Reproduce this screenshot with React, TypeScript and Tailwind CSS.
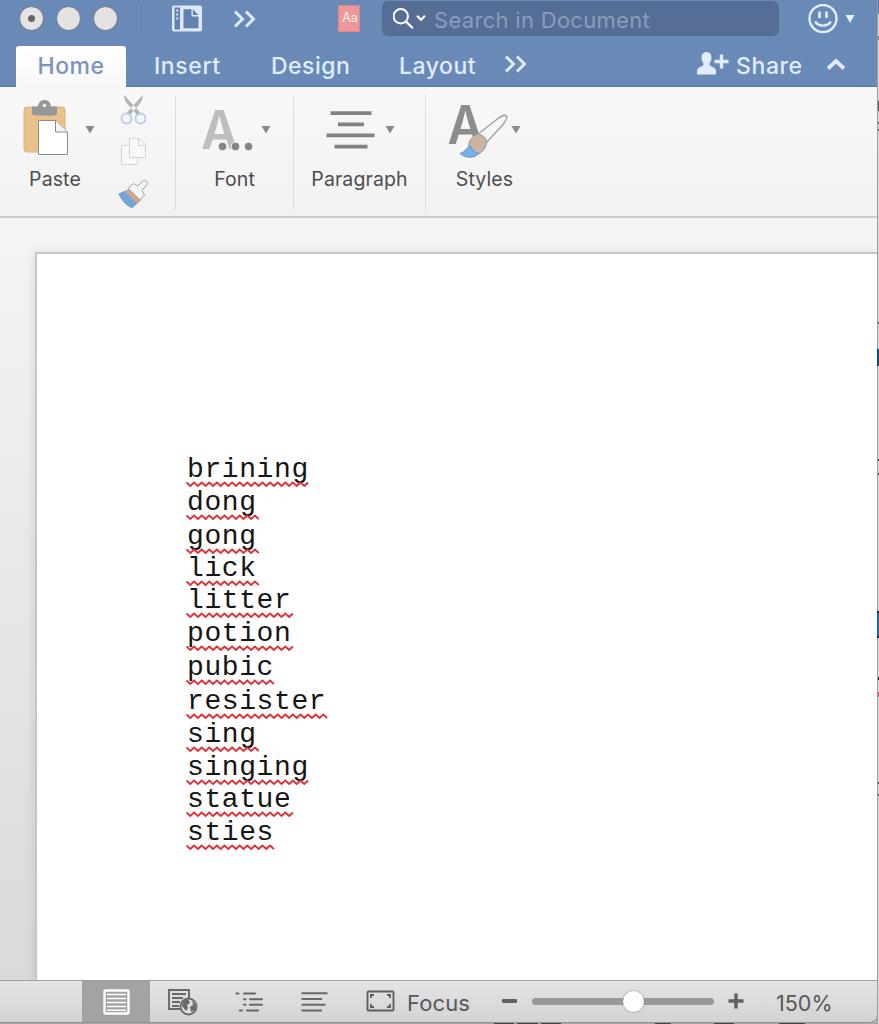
import type { ReactNode } from "react";

const words = [
  { text: "brining", row: "h-[33px]" },
  { text: "dong", row: "h-[34px]" },
  { text: "gong", row: "h-[32px]" },
  { text: "lick", row: "h-[32px]" },
  { text: "litter", row: "h-[33px]" },
  { text: "potion", row: "h-[34px]" },
  { text: "pubic", row: "h-[34px]" },
  { text: "resister", row: "h-[33px]" },
  { text: "sing", row: "h-[33px]" },
  { text: "singing", row: "h-[32px]" },
  { text: "statue", row: "h-[33px]" },
  { text: "sties", row: "h-[33px]" },
];

function Chevrons() {
  return (
    <svg width="24" height="18" viewBox="0 0 24 18" fill="none" stroke="#dfeafb" strokeWidth="3" className="block">
      <path d="M2 1.5l7.500 7.500L2 16.500M13 1.500l7.500 7.500-7.500 7.500" />
    </svg>
  );
}

function Caret({ className = "" }: { className?: string }) {
  return (
    <svg width="10" height="8" viewBox="0 0 10 8" fill="#8b8b8d" className={`block shrink-0 ${className}`}>
      <path d="M.5 0h9L5 7.5z" />
    </svg>
  );
}

// Red spelling zigzag, one half wave every 3.8px
function Squiggle({ length }: { length: number }) {
  const step = 3.8;
  const count = Math.round((length - 1) / step);
  const points = [];
  for (let i = 0; i <= count; i++) {
    points.push(`${(0.5 + i * step).toFixed(1)},${i % 2 ? 5 : 1.5}`);
  }
  return (
    <svg width={length + 3} height="7" className="absolute -left-px top-[28px]" fill="none" stroke="#dc3238" strokeWidth="1.9">
      <polyline points={points.join(" ")} />
    </svg>
  );
}

function TitleBar() {
  return (
    <div className="flex h-[38px] shrink-0 items-start">
      <div className="ml-[19px] mt-[6px] flex gap-[12px]">
        <div className="flex size-[25px] items-center justify-center rounded-full border border-[#6f7686] bg-[#e4e3e1]">
          <div className="size-[7px] rounded-full bg-[#666]" />
        </div>
        <div className="size-[25px] rounded-full border border-[#6f7686] bg-[#e4e3e1]" />
        <div className="size-[25px] rounded-full border border-[#6f7686] bg-[#e4e3e1]" />
      </div>
      <div className="ml-[23px] mt-[4px] h-[29px] w-px bg-[#5f7daf]" />
      <svg width="30" height="27" viewBox="0 0 30 27" className="ml-[30px] mt-[5px]" fill="none">
        <rect x="0" y="0.5" width="30" height="26" rx="2" fill="#dce8fb" />
        <path d="M2.500 2.500h5.500v22H2.500zM11.500 4.300h8v7.200h7v11.800h-15z" fill="#6380af" />
        <path d="M20.800 4.300l5.700 5.700h-5.700z" fill="#6380af" />
        <path d="M5.200 4.500v2M5.200 8.500v2M5.200 12.500v2" stroke="#dce8fb" strokeWidth="2" />
      </svg>
      <div className="ml-[31px] mt-[10px]">
        <Chevrons />
      </div>
      <div className="ml-[81px] mt-[5px] flex h-[27px] w-[22px] items-center justify-center border border-[#dc858b] bg-[#ef969a] pl-[2px] text-[12.5px] text-[#fdeeee]">
        Aa
      </div>
      <div className="ml-[22px] mt-px flex h-[35px] w-[397px] items-center rounded-[6px] bg-[#566d95]">
        <svg width="33" height="22" viewBox="0 0 33 22" fill="none" stroke="#fff" className="ml-[11px]">
          <circle cx="7.800" cy="8.300" r="7.200" strokeWidth="2" />
          <path d="M12.800 13.400l7 6.800" strokeWidth="2.200" />
          <path d="M24 7.800l4 4 4-4" strokeWidth="2.200" />
        </svg>
        <span className="ml-[8px] mt-[3px] text-[22px] leading-[28px] tracking-[0.300px] text-[#899dbe]">Search in Document</span>
      </div>
      <svg width="30" height="30" viewBox="0 0 30 30" className="ml-[29px] mt-[4px]" fill="none" stroke="#e3edfc" strokeWidth="2.400">
        <circle cx="15" cy="14.500" r="13.500" />
        <path d="M7 17.500c3.800 5.400 12.200 5.400 16 0" strokeWidth="2.200" />
        <path d="M11.500 7.500v6.500M18.500 7.500v6.500" strokeWidth="2.600" />
      </svg>
      <svg width="10" height="8" viewBox="0 0 10 8" fill="#e3edfc" className="ml-[7px] mt-[15px]">
        <path d="M.5 0h9L5 8z" />
      </svg>
    </div>
  );
}

function Tabs() {
  return (
    <div className="flex h-[49px] shrink-0 items-end border-b border-[#5c759f] text-[23px] font-medium leading-[28px] text-[#e0ebfc]">
      <div className="-mb-px ml-[16px] flex h-[41px] w-[110px] items-center justify-center rounded-t-[3px] bg-linear-to-b from-white to-[#f8f8f8] pb-[2px] tracking-[0.500px] text-[#7c94bd]">
        Home
      </div>
      <div className="mb-[6px] ml-[28px] w-[67px] tracking-[0.600px]">Insert</div>
      <div className="mb-[6px] ml-[50px] w-[79px] tracking-[0.500px]">Design</div>
      <div className="mb-[6px] ml-[49px] w-[77px] tracking-[0.500px]">Layout</div>
      <div className="mb-[13px] ml-[28px]">
        <Chevrons />
      </div>
      <svg width="32" height="23" viewBox="0 0 32 23" className="mb-[11px] ml-[169px]" fill="#e0ebfc">
        <path d="M9.500 0c3.200 0 5 2.300 5 5.600 0 2.700-.8 4.500-2 5.900v1.700l4.200 2.200c1.500.8 2.300 2 2.300 3.600v3.500H0V19c0-1.600.8-2.800 2.300-3.600l4.200-2.200v-1.700c-1.200-1.400-2-3.200-2-5.900C4.500 2.300 6.300 0 9.500 0z" />
        <path d="M22.800 2.500h3.400v5.300h5.300v3.400h-5.300v5.300h-3.400v-5.300h-5.300V7.800h5.300z" />
      </svg>
      <div className="mb-[6px] ml-[7px] w-[68px] tracking-[0.600px]">Share</div>
      <svg width="20" height="12" viewBox="0 0 20 12" className="mb-[16px] ml-[22px]" fill="none" stroke="#e0ebfc" strokeWidth="3.800">
        <path d="M2 10.500l8-7.500 8 7.500" />
      </svg>
    </div>
  );
}

function Group({ label, className, children }: { label: string; className: string; children: ReactNode }) {
  return (
    <div className={`flex h-[115px] shrink-0 flex-col items-center ${className}`}>
      <div className="flex h-[70px] w-full">{children}</div>
      <span className="text-[19.5px] leading-[28px] tracking-[0.100px] text-[#4d4d4f]">{label}</span>
    </div>
  );
}

function Ribbon() {
  return (
    <div className="flex h-[131px] shrink-0 border-b-2 border-[#cbcbcb] bg-linear-to-b from-[#f8f8f8] to-[#f2f2f2] pt-[8px]">
      <Group label="Paste" className="w-[110px]">
        <svg width="46" height="56" viewBox="0 0 46 56" className="ml-[23px] mt-[5px]">
          <rect x="1" y="7" width="41" height="45" rx="3" fill="#e9c18a" stroke="#d8b27c" />
          <path d="M9 6.500h6c.5-4 2.500-6.500 6.500-6.500S27.500 2.500 28 6.500h6v6c0 2-1 3-3 3H12c-2 0-3-1-3-3z" fill="#969799" />
          <circle cx="21.500" cy="5.500" r="1.800" fill="#eee" />
          <path d="M15.500 20.500h17L44.500 32v22.500h-29z" fill="#fff" stroke="#8c8c8c" />
          <path d="M32.500 20.500V32h12" fill="#f5f5f5" stroke="#8c8c8c" />
        </svg>
        <Caret className="ml-[16px] mt-[31px]" />
      </Group>
      <div className="flex w-[65px] flex-col pl-[8px]">
        <svg width="32" height="31" viewBox="0 0 32 31" fill="none" className="block">
          <path d="M6 0c0 5 3 9 6 12l7.500 8.500 3-2.500-7-8zM25 0c0 5-3 9-6 12l-7.500 8.500-3-2.500 7-8z" fill="#b4b4b4" />
          <circle cx="8.500" cy="23.500" r="5" stroke="#b9cee8" strokeWidth="1.900" />
          <circle cx="22.500" cy="23.500" r="5" stroke="#b9cee8" strokeWidth="1.900" />
        </svg>
        <svg width="32" height="30" viewBox="0 0 32 30" className="mt-[12px] block" fill="#f8f8f8" stroke="#d4d4d4">
          <path d="M3.500 7.500h16v19h-16z" />
          <path d="M11.500.5h10l6 6v13h-16z" />
          <path d="M20.500.5v7h7" fill="none" />
        </svg>
        <svg width="34" height="30" viewBox="0 0 34 30" className="mt-[12px] block">
          <path d="M1 14l8-3.500L20.500 22 14 27.500C9 26 4.500 21 1 14z" fill="#73a4dc" stroke="#6591c4" />
          <path d="M7 11.500l3.500-3L23 20.500l-4 3z" fill="#cda788" />
          <path d="M10 8.500l5.500-5 4 2.500 5-4.500c3-2.500 6.500.5 4 3.500l-4.500 5.500 2.500 4.500-4.500 5z" fill="#f5f5f5" stroke="#a1a1a1" />
        </svg>
      </div>
      <div className="h-[115px] w-px bg-[#dcdcdc]" />
      <Group label="Font" className="w-[117px]">
        <svg width="52" height="70" viewBox="0 -5 52 70" className="ml-[26px]">
          <text x="-1" y="48.500" fontFamily="Inter" fontSize="53" fontWeight="600" fill="#bebec0" textLength="37" lengthAdjust="spacingAndGlyphs">A</text>
          <g fill="#858587" stroke="#f5f5f5" strokeWidth="1">
            <circle cx="20.500" cy="46.500" r="4.300" />
            <circle cx="33.500" cy="46.500" r="4.300" />
            <circle cx="46.500" cy="46.500" r="4.300" />
          </g>
        </svg>
        <Caret className="ml-[7px] mt-[31px]" />
      </Group>
      <div className="h-[115px] w-px bg-[#dcdcdc]" />
      <Group label="Paragraph" className="w-[131px]">
        <svg width="49" height="39" viewBox="0 0 49 39" className="ml-[32px] mt-[16px]" stroke="#828284" strokeWidth="3.800">
          <path d="M4.500 2.200h41M12 13.400h26M.5 24.400h48M8.500 35.600h33" />
        </svg>
        <Caret className="ml-[10px] mt-[31px]" />
      </Group>
      <div className="h-[115px] w-px bg-[#dcdcdc]" />
      <Group label="Styles" className="w-[117px]">
        <svg width="60" height="70" viewBox="0 -8 60 70" className="-mt-[3px] ml-[22px]">
          <text x="-.5" y="44" fontFamily="Inter" fontSize="53" fontWeight="600" fill="#8c8c90" textLength="36" lengthAdjust="spacingAndGlyphs">A</text>
          <path d="M29 35L50 18.500c4-3 7.500-3.500 8.500-2.500s-.5 4.500-3.500 8.500L38 43z" fill="#f7f7f7" stroke="#a3a3a5" strokeWidth="1.500" />
          <path d="M20.500 47c0-7 5-12.500 9.500-12.500s8.500 3.500 8.500 7.500c0 7-6.500 13-12.500 13z" fill="#cbb5a2" stroke="#999" />
          <path d="M12 53.500c5-1 6.500-6.500 11-7.500 1 4.500 5 7 8 7-4 5.500-13 5.500-19 .5z" fill="#78aeea" stroke="#6992c4" />
        </svg>
        <Caret className="ml-[3px] mt-[31px]" />
      </Group>
    </div>
  );
}

function DocumentArea() {
  return (
    <div className="flex min-h-0 flex-1 bg-linear-to-b from-[#f5f5f5] to-[#dadada] pl-[35px] pt-[34px]">
      <div className="flex-1 border-l-2 border-t-2 border-[#c6c6c6] bg-white pl-[150px] pt-[199px] shadow-[-2px_0_9px_rgba(0,0,0,0.09)]">
        {words.map(({ text, row }) => (
          <div
            key={text}
            className={`relative w-fit font-['Courier_New','Liberation_Mono',monospace] text-[28px] leading-[33px] tracking-[0.600px] text-[#151515] ${row}`}
          >
            {text}
            <Squiggle length={text.length * 17.5 + 1.5} />
          </div>
        ))}
      </div>
    </div>
  );
}

function StatusBar() {
  return (
    <div className="flex h-[43px] shrink-0 items-center rounded-br-[8px] border-y border-b-[#929292] border-t-[#a0a0a0] bg-linear-to-b from-[#e4e4e4] to-[#d3d3d3] text-[#58585a]">
      <div className="ml-[82px] flex h-full w-[68px] items-center justify-center bg-[#a3a3a3]">
        <svg width="27" height="26" viewBox="0 0 27 26" fill="none" stroke="#fff">
          <rect x="1.500" y="1.500" width="24" height="23" rx="1" strokeWidth="2.400" />
          <path d="M4 5.500h19M4 9.500h19M4 13.500h19M4 17.500h19M4 21.300h19" strokeWidth="1.600" />
        </svg>
      </div>
      <svg width="31" height="28" viewBox="0 0 31 28" className="ml-[17px]" fill="none" stroke="#69696b" strokeWidth="1.900">
        <path d="M13 21H2V2h20v9M5 6h14M5 10h11M5 14h8M5 18h7" />
        <circle cx="21.500" cy="18.500" r="8" fill="#dedede" />
        <path d="M16 13l5-2 2 4-3 2 1 3-2 3-4-5zM25 13l4 4-1 5-4 2-1-5 3-2z" fill="#69696b" stroke="none" />
      </svg>
      <svg width="29" height="20" viewBox="0 0 29 20" className="ml-[37px]" fill="none" stroke="#69696b" strokeWidth="2.100" strokeLinecap="round">
        <path d="M1.500 1.500h2M9 1.500h11M9 7.200h1.500M15 7.200h12M9 12.800h1.500M15 12.800h12M5 18.500h2M12 18.500h11" />
      </svg>
      <svg width="27" height="20" viewBox="0 0 27 20" className="ml-[37px]" fill="none" stroke="#69696b" strokeWidth="2">
        <path d="M.5 1.300h26M.5 7h20.500M.5 12.700h24M.5 18.500h20.500" />
      </svg>
      <svg width="29" height="22" viewBox="0 0 29 22" className="mb-[2px] ml-[38px]" fill="none" stroke="#5f5f61" strokeWidth="1.900">
        <rect x="1.500" y="1.500" width="26" height="19" rx="1" />
        <path d="M5 8V5h3M21 5h3v3M24 14v3h-3M8 17H5v-3" />
      </svg>
      <span className="ml-[12px] mt-[2px] w-[64px] text-[22px] leading-[28px] tracking-[0.100px]">Focus</span>
      <div className="mb-px ml-[31px] h-[4px] w-[15px] rounded-[1px] bg-[#606062]" />
      <div className="relative ml-[15px] h-[7px] w-[182px] rounded-full bg-[#999]">
        <div className="absolute left-[91px] top-[-7px] size-[21px] rounded-full bg-white shadow-[0_0_2px_#777]" />
      </div>
      <svg width="16" height="16" viewBox="0 0 16 16" className="mb-px ml-[14px]" stroke="#606062" strokeWidth="3.400">
        <path d="M8 .5v15M.5 8h15" />
      </svg>
      <span className="ml-[32px] mt-[2px] w-[60px] text-[21.5px] leading-[28px]">150%</span>
    </div>
  );
}

// Sliver of the window that sits behind this one
function BackgroundEdge() {
  return (
    <div className="flex w-[2px] shrink-0 flex-col border-l border-[#9c9c9c] bg-[#dcdcdc]">
      <div className="h-[14px] bg-[#526f9f]" />
      <div className="mt-[22px] h-[4px] bg-[#777]" />
      <div className="mt-[61px] h-[10px] bg-[#555]" />
      <div className="mt-[11px] h-[2px] bg-[#555]" />
      <div className="mt-[5px] h-[2px] bg-[#555]" />
      <div className="mt-[191px] h-[2px] bg-[#444]" />
      <div className="-ml-px mt-[25px] h-[17px] bg-[#1f4568]" />
      <div className="mt-[93px] h-[2px] bg-[#333]" />
      <div className="mt-[12px] h-[2px] bg-[#333]" />
      <div className="-ml-px mt-[136px] h-[27px] border-y-2 border-[#222] bg-[#315f91]" />
      <div className="mt-[39px] h-[3px] bg-[#222]" />
      <div className="mt-[12px] h-[5px] bg-[#d54a4a]" />
      <div className="mt-[85px] h-[2px] bg-[#444]" />
      <div className="mt-[10px] h-[2px] bg-[#444]" />
    </div>
  );
}

export default function App() {
  return (
    <div className="flex h-[1024px] w-[879px] overflow-hidden bg-[#b0b0b0] font-['Inter','Liberation_Sans',sans-serif]">
      <div className="flex w-[877px] shrink-0 flex-col">
        <div className="flex shrink-0 flex-col bg-[#6989b7]">
          <TitleBar />
          <Tabs />
        </div>
        <Ribbon />
        <DocumentArea />
        <StatusBar />
        {/* tops of the lines showing below the window */}
        <div className="flex h-px shrink-0 bg-[#a8a8a8]">
          <div className="ml-[494px] h-px w-[20px] bg-[#444]" />
          <div className="ml-[3px] h-px w-[21px] bg-[#444]" />
          <div className="ml-[3px] h-px w-[20px] bg-[#444]" />
          <div className="ml-[94px] h-px w-[16px] bg-[#444]" />
          <div className="ml-[43px] h-px w-[20px] bg-[#444]" />
          <div className="ml-[45px] h-px w-[26px] bg-[#444]" />
        </div>
      </div>
      <BackgroundEdge />
    </div>
  );
}
